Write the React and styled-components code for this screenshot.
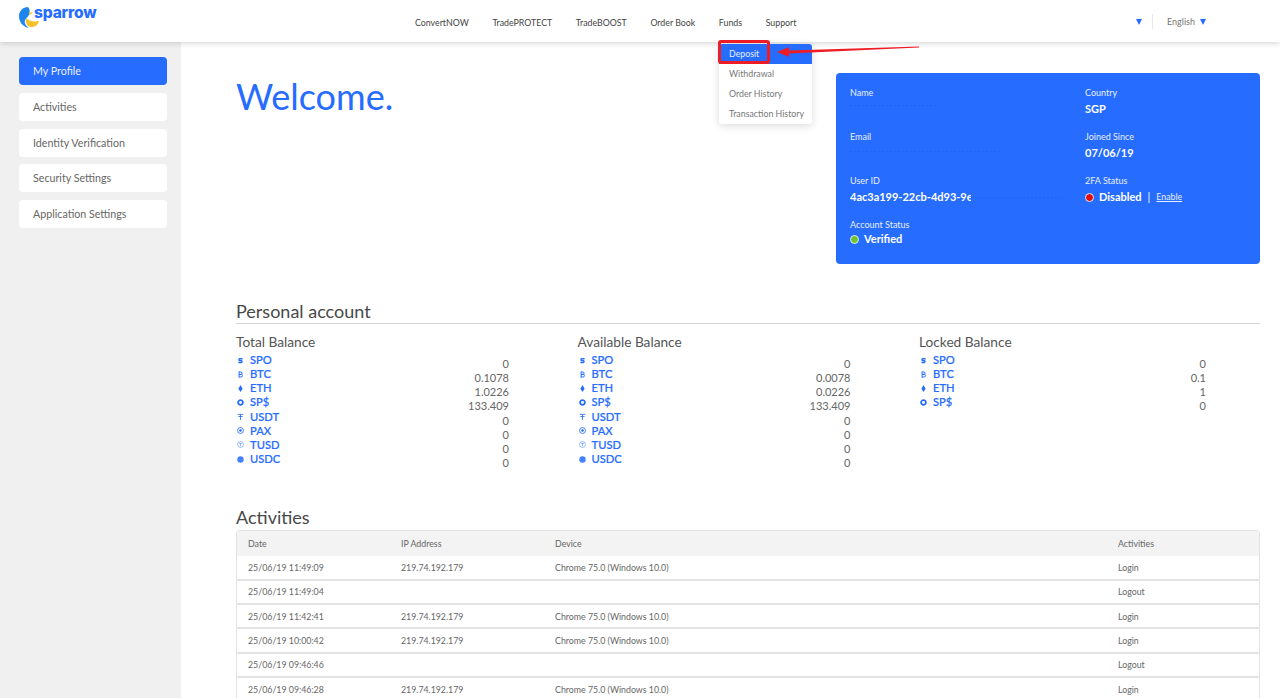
import React from "react";
import styled, { createGlobalStyle } from "styled-components";

const Global = createGlobalStyle`
  html, body {
    margin: 0;
    padding: 0;
    height: 698px;
    overflow: hidden;
    background: #fff;
    font-family: "Lato", "Open Sans", sans-serif;
    color: #555;
  }
  * { box-sizing: border-box; }
`;

const BLUE = "#266cff";

const Page = styled.div`
  position: relative;
  width: 1280px;
  height: 698px;
  overflow: hidden;
`;

const Header = styled.header`
  position: relative;
  z-index: 2;
  height: 42px;
  background: #fff;
  box-shadow: 0 1px 6px rgba(0, 0, 0, 0.18);
  display: flex;
  align-items: center;
`;

const Brand = styled.div`
  width: 415px;
  height: 42px;
  padding: 6px 0 0 19px;
  display: flex;
  align-items: flex-start;
`;

const BrandName = styled.span`
  font-family: "Inter", sans-serif;
  font-size: 15.6px;
  font-weight: 800;
  line-height: 13px;
  color: ${BLUE};
  margin-left: -6px;
  letter-spacing: -0.2px;
`;

const NavList = styled.nav`
  display: flex;
  gap: 23.6px;
  margin-top: 3px;
`;

const NavItem = styled.a`
  font-size: 8.8px;
  line-height: 14px;
  color: #444;
`;

const HeaderRight = styled.div`
  position: absolute;
  right: 74px;
  top: 14px;
  display: flex;
  align-items: center;
  height: 15px;
`;

const Caret = styled.span`
  width: 0;
  height: 0;
  border-left: 3.5px solid transparent;
  border-right: 3.5px solid transparent;
  border-top: 6px solid ${BLUE};
`;

const Divider = styled.span`
  width: 1px;
  height: 15px;
  background: #e8e8e8;
  margin: 0 14px 0 10px;
`;

const LangLabel = styled.span`
  font-size: 9px;
  color: #777;
  margin-right: 5px;
`;

const Body = styled.div`
  display: flex;
  height: 656px;
`;

const Sidebar = styled.aside`
  width: 181px;
  flex: none;
  background: #f0f0f0;
  padding: 15px 14px 0 19px;
  display: flex;
  flex-direction: column;
  gap: 7.8px;
`;

const SideItem = styled.div`
  height: 28px;
  border-radius: 4px;
  padding-left: 14px;
  font-size: 10.7px;
  line-height: 27px;
  background: ${(p) => (p.$active ? BLUE : "#fff")};
  color: ${(p) => (p.$active ? "#e8efff" : "#666")};
`;

const Main = styled.main`
  flex: 1;
  padding: 31px 20px 0 55px;
  min-width: 0;
`;

const TopRow = styled.div`
  display: flex;
  justify-content: space-between;
  align-items: flex-start;
  height: 191px;
`;

const Welcome = styled.h1`
  margin: 0;
  font-size: 36px;
  font-weight: 400;
  line-height: 46px;
  color: ${BLUE};
`;

const ProfileCard = styled.section`
  width: 424px;
  height: 191px;
  background: ${BLUE};
  border-radius: 4px;
  padding: 13px 14px;
  display: grid;
  grid-template-columns: 235px 1fr;
  grid-auto-rows: 44px;
  color: #fff;
`;

const Field = styled.div`
  display: flex;
  flex-direction: column;
  min-width: 0;
`;

const FieldLabel = styled.span`
  font-size: 9px;
  line-height: 13px;
  color: #e6eeff;
`;

const FieldValue = styled.span`
  display: flex;
  align-items: center;
  margin-top: ${(p) => (p.$tight ? "0" : "2px")};
  font-size: 11px;
  font-weight: 700;
  line-height: 16px;
  white-space: nowrap;
`;

const ClippedId = styled.span`
  display: block;
  width: 121px;
  overflow: hidden;
`;

const Redacted = styled.span`
  display: block;
  width: ${(p) => p.$width};
  height: 1px;
  margin-top: ${(p) => p.$top || "0"};
  background: repeating-linear-gradient(90deg, rgba(10, 60, 190, 0.2) 0 2px, transparent 2px 4px);
`;

const Dot = styled.span`
  width: 9px;
  height: 9px;
  border-radius: 50%;
  margin-right: 5px;
  background: ${(p) => p.$color};
  border: 1px solid #dfe8ff;
`;

const Sep = styled.span`
  font-weight: 400;
  margin: 0 6px;
`;

const EnableLink = styled.a`
  font-size: 8.8px;
  font-weight: 400;
  text-decoration: underline;
  color: #e6eeff;
`;

const SectionTitle = styled.h2`
  margin: ${(p) => p.$top} 0 0;
  font-size: 18px;
  font-weight: 400;
  line-height: 24px;
  color: #484848;
`;

const Rule = styled.div`
  height: 1px;
  background: #d4d4d4;
`;

const BalanceGrid = styled.div`
  display: flex;
  gap: 68.5px;
  margin-top: 9px;
`;

const BalanceCol = styled.div`
  width: 273px;
  &:last-child {
    width: 287px;
  }
`;

const BalanceTitle = styled.h3`
  margin: 0 0 3px;
  font-size: 13.7px;
  font-weight: 400;
  line-height: 17px;
  color: #555;
`;

const BalanceRow = styled.div`
  display: flex;
  justify-content: space-between;
  height: 14.15px;
`;

const Coin = styled.span`
  display: flex;
  align-items: center;
  font-size: 11.2px;
  line-height: 14px;
  font-weight: 500;
  -webkit-text-stroke: 0.2px ${BLUE};
  color: ${BLUE};
`;

const CoinGlyph = styled.svg`
  width: 7px;
  height: 7px;
  margin: 0 6px 0 1px;
  flex: none;
`;

const Amount = styled.span`
  font-size: 11px;
  line-height: 14px;
  color: #666;
  margin-top: 4px;
`;

const ActivityTable = styled.div`
  margin-top: 1px;
  border: 1px solid #e2e2e2;
  border-bottom: none;
  border-radius: 4px 4px 0 0;
`;

const TableRow = styled.div`
  display: grid;
  grid-template-columns: 153px 154px 563px 1fr;
  height: ${(p) => (p.$head ? "25px" : "24.4px")};
  padding-left: 11px;
  align-items: center;
  font-size: 8.8px;
  color: #666;
  background: ${(p) => (p.$head ? "#f3f3f3" : "#fff")};
  border-bottom: ${(p) => (p.$head ? "none" : "2px solid #e4e4e4")};
`;

const Dropdown = styled.div`
  position: absolute;
  z-index: 3;
  left: 719px;
  top: 44px;
  width: 93px;
  background: #fff;
  border-radius: 3px;
  box-shadow: 0 2px 8px rgba(0, 0, 0, 0.14);
`;

const DropItem = styled.div`
  height: 20px;
  padding-left: 10px;
  font-size: 8.8px;
  line-height: 19px;
  white-space: nowrap;
  background: ${(p) => (p.$active ? BLUE : "transparent")};
  color: ${(p) => (p.$active ? "#e8efff" : "#777")};
  border-radius: ${(p) => (p.$active ? "3px 3px 0 0" : "0")};
`;

const Highlight = styled.div`
  position: absolute;
  z-index: 4;
  left: 718px;
  top: 40px;
  width: 52px;
  height: 24px;
  border: 3px solid #ee1c25;
  border-radius: 3px;
`;

const Arrow = styled.svg`
  position: absolute;
  z-index: 4;
  left: 775px;
  top: 43px;
  width: 146px;
  height: 16px;
`;

const BrandBird = () => (
  <svg width="21" height="21" viewBox="0 0 21 21" style={{ marginTop: 1, flex: "none" }}>
    <path d="M9 0C4 0 0 4 0 9c0 6 4 11 10 12-3-2-5-5-4-8 1-2 3-3 4-5 1-3 1-6-1-8z" fill="#1c86ee" />
    <path d="M7 11c3 3 7 4 13 3-1 4-4 6-8 6-3 0-6-3-5-9z" fill="#f6c12d" />
    <path d="M10 5l4 1-4 2z" fill="#f6c12d" />
  </svg>
);

const glyphs = {
  SPO: <path d="M8 2.5H3.8a1.4 1.4 0 0 0 0 2.7h2.4a1.4 1.4 0 0 1 0 2.7H2" stroke={BLUE} strokeWidth="2" fill="none" />,
  BTC: <path d="M3 .5v9M3 1.5h2.6a1.7 1.7 0 0 1 0 3.4H3M3 4.9h3a1.8 1.8 0 0 1 0 3.6H3" stroke={BLUE} strokeWidth="1.4" fill="none" />,
  ETH: <path d="M5 0l3 5.5-3 4.5-3-4.5z" fill={BLUE} />,
  SP$: <circle cx="5" cy="5" r="3.4" fill="none" stroke={BLUE} strokeWidth="2.6" />,
  USDT: <path d="M1 2h8M5 2v8M2 5h6" stroke={BLUE} strokeWidth="1.4" fill="none" opacity="0.85" />,
  PAX: (
    <>
      <circle cx="5" cy="5" r="4.2" fill="none" stroke={BLUE} strokeWidth="1.2" />
      <circle cx="5" cy="5" r="1.8" fill={BLUE} />
    </>
  ),
  TUSD: (
    <>
      <circle cx="5" cy="5" r="4.2" fill="none" stroke={BLUE} strokeWidth="0.9" opacity="0.7" />
      <path d="M3 3.5h4M5 3.5v4" stroke={BLUE} strokeWidth="1" opacity="0.7" />
    </>
  ),
  USDC: <circle cx="5" cy="5" r="4.6" fill={BLUE} opacity="0.85" />,
};

const CoinLine = ({ name, value }) => (
  <BalanceRow>
    <Coin>
      <CoinGlyph viewBox="0 0 10 10">{glyphs[name]}</CoinGlyph>
      {name}
    </Coin>
    <Amount>{value}</Amount>
  </BalanceRow>
);

const names = ["SPO", "BTC", "ETH", "SP$", "USDT", "PAX", "TUSD", "USDC"];
const balances = [
  { title: "Total Balance", values: ["0", "0.1078", "1.0226", "133.409", "0", "0", "0", "0"] },
  { title: "Available Balance", values: ["0", "0.0078", "0.0226", "133.409", "0", "0", "0", "0"] },
  { title: "Locked Balance", values: ["0", "0.1", "1", "0"] },
];

const device = "Chrome 75.0 (Windows 10.0)";
const ip = "219.74.192.179";
const activity = [
  ["25/06/19 11:49:09", ip, device, "Login"],
  ["25/06/19 11:49:04", "", "", "Logout"],
  ["25/06/19 11:42:41", ip, device, "Login"],
  ["25/06/19 10:00:42", ip, device, "Login"],
  ["25/06/19 09:46:46", "", "", "Logout"],
  ["25/06/19 09:46:28", ip, device, "Login"],
];

export default function App() {
  return (
    <Page>
      <Global />
      <Header>
        <Brand>
          <BrandBird />
          <BrandName>sparrow</BrandName>
        </Brand>
        <NavList>
          {["ConvertNOW", "TradePROTECT", "TradeBOOST", "Order Book", "Funds", "Support"].map((n) => (
            <NavItem key={n}>{n}</NavItem>
          ))}
        </NavList>
        <HeaderRight>
          <Caret />
          <Divider />
          <LangLabel>English</LangLabel>
          <Caret />
        </HeaderRight>
      </Header>

      <Dropdown>
        <DropItem $active>Deposit</DropItem>
        <DropItem>Withdrawal</DropItem>
        <DropItem>Order History</DropItem>
        <DropItem>Transaction History</DropItem>
      </Dropdown>
      <Highlight />
      <Arrow viewBox="0 0 146 16">
        <path d="M2 9l12-5v3.4L144 3.6v1L14 10.4V14z" fill="#ee1c25" />
      </Arrow>

      <Body>
        <Sidebar>
          <SideItem $active>My Profile</SideItem>
          <SideItem>Activities</SideItem>
          <SideItem>Identity Verification</SideItem>
          <SideItem>Security Settings</SideItem>
          <SideItem>Application Settings</SideItem>
        </Sidebar>

        <Main>
          <TopRow>
            <Welcome>Welcome.</Welcome>
            <ProfileCard>
              <Field>
                <FieldLabel>Name</FieldLabel>
                <Redacted $width="86px" $top="6px" />
              </Field>
              <Field>
                <FieldLabel>Country</FieldLabel>
                <FieldValue>SGP</FieldValue>
              </Field>
              <Field>
                <FieldLabel>Email</FieldLabel>
                <Redacted $width="150px" $top="8px" />
              </Field>
              <Field>
                <FieldLabel>Joined Since</FieldLabel>
                <FieldValue>07/06/19</FieldValue>
              </Field>
              <Field>
                <FieldLabel>User ID</FieldLabel>
                <FieldValue>
                  <ClippedId>4ac3a199-22cb-4d93-9e</ClippedId>
                  <Redacted $width="92px" />
                </FieldValue>
              </Field>
              <Field>
                <FieldLabel>2FA Status</FieldLabel>
                <FieldValue>
                  <Dot $color="#e00b0b" />
                  Disabled
                  <Sep>|</Sep>
                  <EnableLink>Enable</EnableLink>
                </FieldValue>
              </Field>
              <Field>
                <FieldLabel>Account Status</FieldLabel>
                <FieldValue $tight>
                  <Dot $color="#6fc52d" />
                  Verified
                </FieldValue>
              </Field>
            </ProfileCard>
          </TopRow>

          <SectionTitle $top="35px">Personal account</SectionTitle>
          <Rule />
          <BalanceGrid>
            {balances.map((b) => (
              <BalanceCol key={b.title}>
                <BalanceTitle>{b.title}</BalanceTitle>
                {b.values.map((v, i) => (
                  <CoinLine key={names[i]} name={names[i]} value={v} />
                ))}
              </BalanceCol>
            ))}
          </BalanceGrid>

          <SectionTitle $top="39px">Activities</SectionTitle>
          <ActivityTable>
            <TableRow $head>
              <span>Date</span>
              <span>IP Address</span>
              <span>Device</span>
              <span>Activities</span>
            </TableRow>
            {activity.map((row) => (
              <TableRow key={row[0]}>
                {row.map((cell, i) => (
                  <span key={i}>{cell}</span>
                ))}
              </TableRow>
            ))}
          </ActivityTable>
        </Main>
      </Body>
    </Page>
  );
}
